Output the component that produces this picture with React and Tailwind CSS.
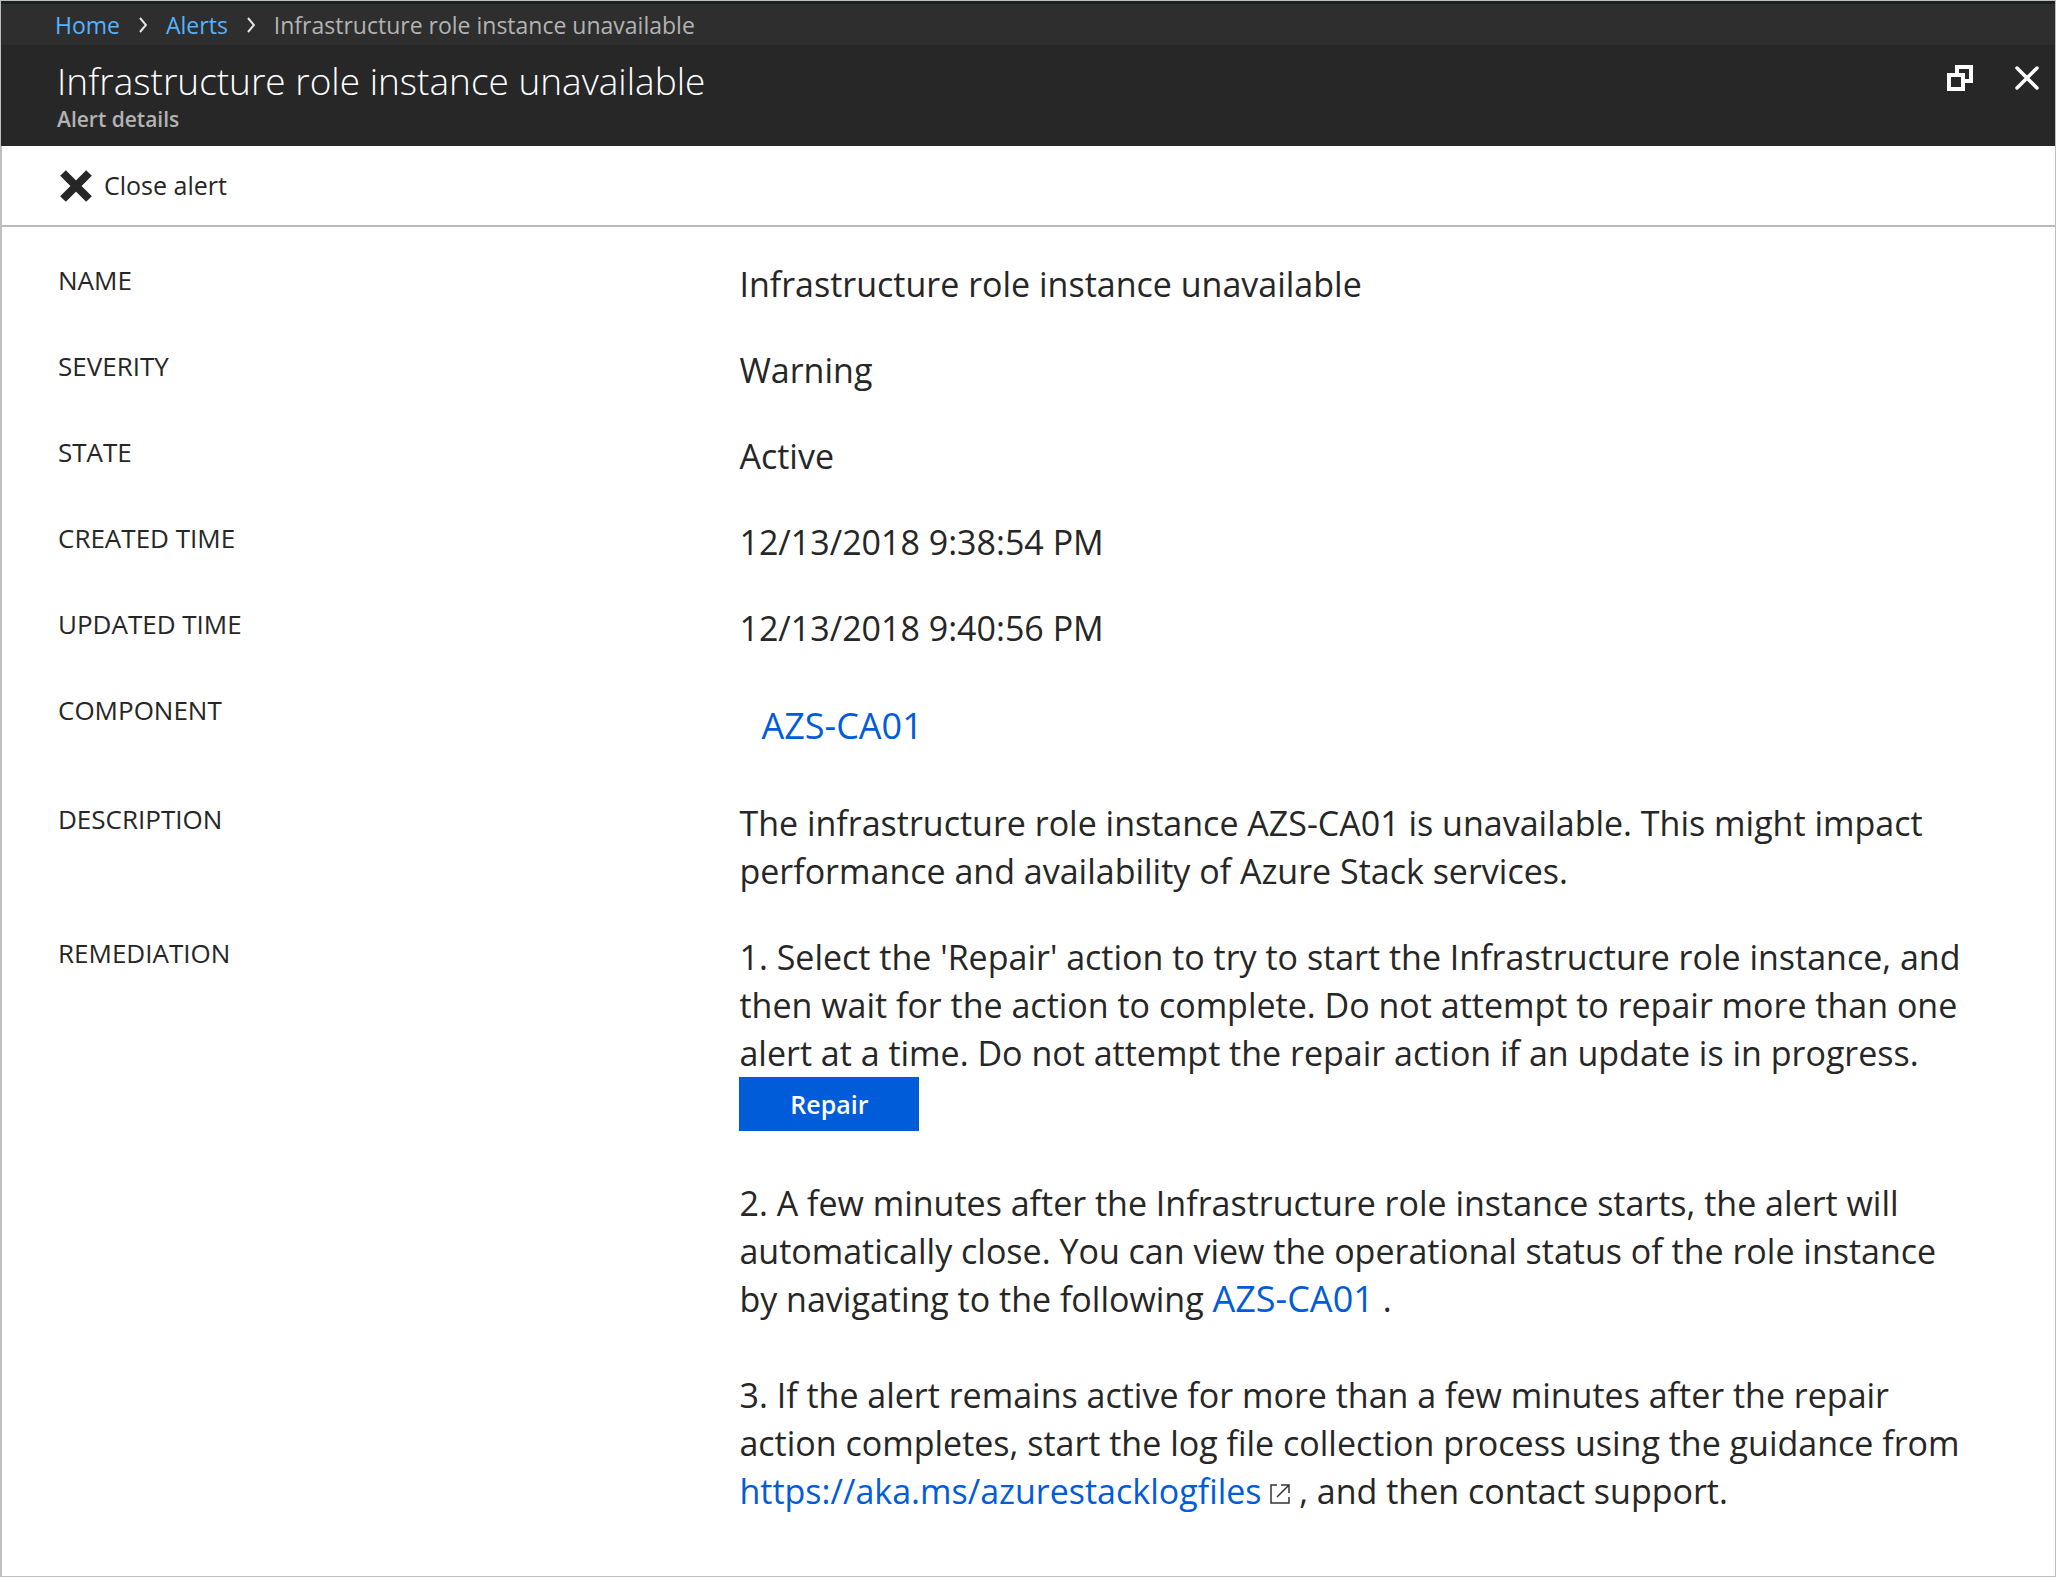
const details = [
  { label: 'NAME', value: 'Infrastructure role instance unavailable' },
  { label: 'SEVERITY', value: 'Warning' },
  { label: 'STATE', value: 'Active' },
  { label: 'CREATED TIME', value: '12/13/2018 9:38:54 PM' },
  { label: 'UPDATED TIME', value: '12/13/2018 9:40:56 PM' },
];

function Chevron() {
  return (
    <svg className="w-2 h-4 shrink-0" viewBox="0 0 8 16" fill="none" stroke="#e6e6e6" strokeWidth="2">
      <path d="M1 1l6 7-6 7" />
    </svg>
  );
}

function RestoreIcon() {
  return (
    <svg className="w-[26px] h-[26px]" viewBox="0 0 26 26" fill="none" stroke="#fff" strokeWidth="4">
      <path d="M10 9V2h14v14h-6" />
      <path d="M2 10h14v14H2z" />
    </svg>
  );
}

function CloseIcon() {
  return (
    <svg className="w-6 h-6" viewBox="0 0 24 24" fill="none" stroke="#fff" strokeWidth="3.5" strokeLinecap="round">
      <path d="M2 2l20 20M22 2L2 22" />
    </svg>
  );
}

function ExternalIcon() {
  return (
    <svg className="inline w-5 h-5 align-baseline" viewBox="0 0 20 20" fill="none" stroke="#333" strokeWidth="1.5">
      <path d="M7 1H1v18h18v-6" />
      <path d="M11 1h8v8M19 1L7 13" />
    </svg>
  );
}

function ComponentLink() {
  return (
    <a href="#azs-ca01" className="text-[36px] leading-none text-[#015cda] hover:underline">AZS-CA01</a>
  );
}

function Row({ label, children }) {
  return (
    <div className="grid grid-cols-[35%_1fr]">
      <dt className="text-[26px] leading-10">{label}</dt>
      <dd className="text-[34px] leading-[48px] pr-6">{children}</dd>
    </div>
  );
}

export default function App() {
  return (
    <div className="min-h-screen flex flex-col border border-[#bfbfbf] bg-white text-[#262626] font-['Open_Sans',sans-serif]">
      <nav aria-label="Breadcrumb" className="flex items-center gap-[19px] h-11 pt-px px-[54px] border-t-3 border-[#1c211e] bg-[#2e2e2e] text-[23px]">
        <a href="#home" className="text-[#55b3ff]">Home</a>
        <Chevron />
        <a href="#alerts" className="text-[#55b3ff]">Alerts</a>
        <Chevron />
        <span className="text-[#b3b3b3]">Infrastructure role instance unavailable</span>
      </nav>

      <header className="flex items-start justify-between h-[101px] pl-14 pr-4 bg-[#272727]">
        <div className="pt-3">
          <h1 className="text-[37px] leading-[48px] font-light text-white">Infrastructure role instance unavailable</h1>
          <p className="text-[21px] leading-7 font-semibold text-[#b3b3b3]">Alert details</p>
        </div>
        <div className="flex items-center gap-[42px] pt-5">
          <button type="button" aria-label="Restore"><RestoreIcon /></button>
          <button type="button" aria-label="Close"><CloseIcon /></button>
        </div>
      </header>

      <main className="grow flex flex-col border-l border-[#bfbfbf]">
        <div className="flex items-center h-[81px] px-[58px] border-b-2 border-[#bababa]">
          <button type="button" className="flex items-center gap-3 text-[25px]">
            <svg className="w-8 h-8" viewBox="0 0 32 32" fill="none" stroke="#262626" strokeWidth="8">
              <path d="M3 3l26 26M29 3L3 29" />
            </svg>
            Close alert
          </button>
        </div>

        <dl className="flex flex-col gap-[38px] pt-[33px] pb-10 pl-14 pr-[50px]">
          {details.map((item) => (
            <Row key={item.label} label={item.label}>{item.value}</Row>
          ))}
          <Row label="COMPONENT">
            <div className="pt-3 pb-[11px] pl-[22px]">
              <ComponentLink />
            </div>
          </Row>
          <Row label="DESCRIPTION">
            The infrastructure role instance AZS-CA01 is unavailable. This might impact performance and
            availability of Azure Stack services.
          </Row>
          <Row label="REMEDIATION">
            <p>
              1. Select the 'Repair' action to try to start the Infrastructure role instance, and then wait
              for the action to complete. Do not attempt to repair more than one alert at a time. Do not
              attempt the repair action if an update is in progress.
            </p>
            <button type="button" className="block w-[180px] h-[54px] bg-[#015cda] text-[25px] font-semibold text-white">
              Repair
            </button>
            <p className="mt-12">
              2. A few minutes after the Infrastructure role instance starts, the alert will automatically
              close. You can view the operational status of the role instance by navigating to the
              following <ComponentLink /> .
            </p>
            <p className="mt-12">
              3. If the alert remains active for more than a few minutes after the repair action completes,
              start the log file collection process using the guidance from{' '}
              <a href="https://aka.ms/azurestacklogfiles" className="text-[#015cda] hover:underline">https://aka.ms/azurestacklogfiles</a>{' '}
              <ExternalIcon /> , and then contact support.
            </p>
          </Row>
        </dl>
      </main>
    </div>
  );
}
